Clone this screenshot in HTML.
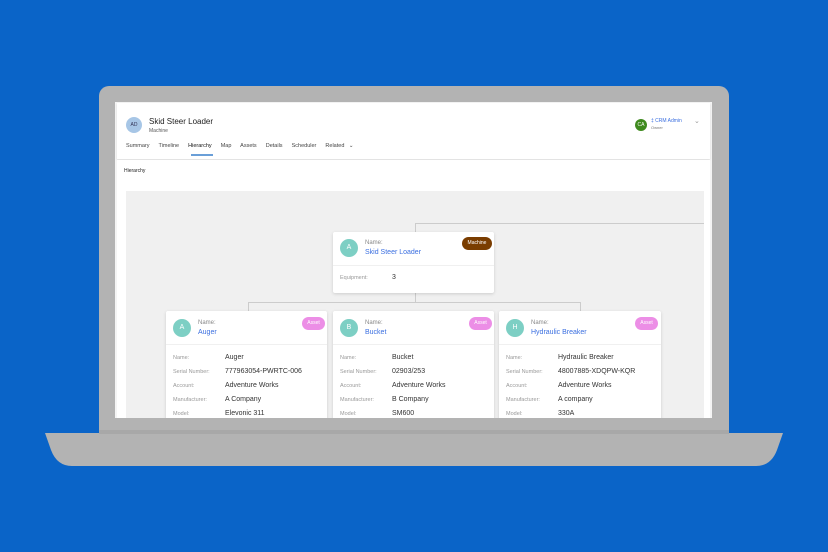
<!DOCTYPE html>
<html><head><style>
*{margin:0;padding:0;box-sizing:border-box}
body{width:828px;height:552px;background:#0a64c8;position:relative;overflow:hidden;font-family:"Liberation Sans",sans-serif}
.a{position:absolute}
.lid{left:99px;top:86px;width:630px;height:348px;background:#b3b3b3;border-radius:10px 10px 0 0}
.scr{left:115px;top:102px;width:597px;height:316px;background:#f4f4f4;overflow:hidden}
.card{position:absolute;background:#fff;box-shadow:0 1px 3px rgba(0,0,0,.15);border-radius:2px}
.av{position:absolute;width:18px;height:18px;border-radius:50%;background:#7dcfc4;color:#fff;font-size:7px;text-align:center;line-height:18px}
.lbl{position:absolute;font-size:6px;color:#888}
.nm{position:absolute;font-size:7px;color:#3b6fe0}
.pill{position:absolute;border-radius:8px;font-size:5px;color:#fff;text-align:center}
.row{position:absolute;left:7px;font-size:5.5px;color:#999}
.val{position:absolute;left:59px;font-size:7px;color:#333}
.ln{position:absolute;background:#ccc}
</style></head><body>
<div class="a lid"></div>
<svg class="a" style="left:0;top:0" width="828" height="552"><path d="M45 433 H783 L777 450 Q771 466 756 466 H72 Q57 466 51 450 Z" fill="#b3b3b3"/><rect x="99" y="430" width="630" height="4" fill="#a8a8a8"/></svg>
<div class="a scr">
 <div class="a" style="left:2px;top:1px;width:593px;height:56px;background:#fff;box-shadow:0 1px 2px rgba(0,0,0,.1)">
  <div class="a" style="left:9px;top:14px;width:16px;height:16px;border-radius:50%;background:#a7c6e6;font-size:5px;color:#335;text-align:center;line-height:16px">AD</div>
  <div class="a" style="left:32px;top:14px;font-size:8px;color:#222">Skid Steer Loader</div>
  <div class="a" style="left:32px;top:25px;font-size:5px;color:#555">Machine</div>
  <div class="a" style="left:9px;top:40px;font-size:5.5px;color:#444;word-spacing:3px">Summary&nbsp; Timeline&nbsp; <span style="color:#111">Hierarchy</span>&nbsp; Map&nbsp; Assets&nbsp; Details&nbsp; Scheduler&nbsp; Related ⌄</div>
  <div class="a" style="left:74px;top:51px;width:22px;height:2px;background:#6a9fd8"></div>
  <div class="a" style="left:518px;top:16px;width:12px;height:12px;border-radius:50%;background:#3f8a1e;color:#fff;font-size:5px;text-align:center;line-height:12px">CA</div>
  <div class="a" style="left:534px;top:15px;font-size:5px;color:#3b6fe0">‡ CRM Admin</div>
  <div class="a" style="left:534px;top:22px;font-size:4px;color:#777">Owner</div>
  <div class="a" style="left:577px;top:14px;font-size:7px;color:#999">⌄</div>
 </div>
 <div class="a" style="left:2px;top:58px;width:593px;height:260px;background:#fff">
  <div class="a" style="left:7px;top:8px;font-size:5px;color:#222">Hierarchy</div>
  <div class="a" style="left:9px;top:31px;width:578px;height:240px;background:#f0f0f0"></div>
 </div>
 <div class="ln" style="left:300px;top:121px;width:289px;height:1px"></div>
 <div class="ln" style="left:300px;top:121px;width:1px;height:10px"></div>
 <div class="ln" style="left:300px;top:190px;width:1px;height:10px"></div>
 <div class="ln" style="left:133px;top:200px;width:333px;height:1px"></div>
 <div class="ln" style="left:133px;top:200px;width:1px;height:10px"></div>
 <div class="ln" style="left:465px;top:200px;width:1px;height:10px"></div>
 <div class="card" style="left:218px;top:130px;width:161px;height:61px">
  <div class="av" style="left:7px;top:7px">A</div>
  <div class="lbl" style="left:32px;top:8px">Name:</div>
  <div class="nm" style="left:32px;top:17px">Skid Steer Loader</div>
  <div class="pill" style="left:129px;top:5px;width:30px;height:13px;line-height:13px;background:#7a3d00">Machine</div>
  <div class="a" style="left:0;top:33px;width:100%;height:1px;background:#f0f0f0"></div>
  <div class="row" style="top:43px">Equipment:</div>
  <div class="val" style="top:42px">3</div>
 </div>
 <div class="card" style="left:51px;top:209px;width:161px;height:120px">
  <div class="av" style="left:7px;top:8px">A</div>
  <div class="lbl" style="left:32px;top:9px">Name:</div>
  <div class="nm" style="left:32px;top:18px">Auger</div>
  <div class="pill" style="left:136px;top:6px;width:23px;height:13px;line-height:13px;background:#ec8ee6">Asset</div>
  <div class="a" style="left:0;top:33px;width:100%;height:1px;background:#f0f0f0"></div>
  <div class="row" style="top:44px">Name:</div><div class="val" style="top:43px">Auger</div>
  <div class="row" style="top:58px">Serial Number:</div><div class="val" style="top:57px">777963054-PWRTC-006</div>
  <div class="row" style="top:72px">Account:</div><div class="val" style="top:71px">Adventure Works</div>
  <div class="row" style="top:86px">Manufacturer:</div><div class="val" style="top:85px">A Company</div>
  <div class="row" style="top:100px">Model:</div><div class="val" style="top:99px">Elevonic 311</div>
 </div>
 <div class="card" style="left:218px;top:209px;width:161px;height:120px">
  <div class="av" style="left:7px;top:8px">B</div>
  <div class="lbl" style="left:32px;top:9px">Name:</div>
  <div class="nm" style="left:32px;top:18px">Bucket</div>
  <div class="pill" style="left:136px;top:6px;width:23px;height:13px;line-height:13px;background:#ec8ee6">Asset</div>
  <div class="a" style="left:0;top:33px;width:100%;height:1px;background:#f0f0f0"></div>
  <div class="row" style="top:44px">Name:</div><div class="val" style="top:43px">Bucket</div>
  <div class="row" style="top:58px">Serial Number:</div><div class="val" style="top:57px">02903/253</div>
  <div class="row" style="top:72px">Account:</div><div class="val" style="top:71px">Adventure Works</div>
  <div class="row" style="top:86px">Manufacturer:</div><div class="val" style="top:85px">B Company</div>
  <div class="row" style="top:100px">Model:</div><div class="val" style="top:99px">SM600</div>
 </div>
 <div class="card" style="left:384px;top:209px;width:162px;height:120px">
  <div class="av" style="left:7px;top:8px">H</div>
  <div class="lbl" style="left:32px;top:9px">Name:</div>
  <div class="nm" style="left:32px;top:18px">Hydraulic Breaker</div>
  <div class="pill" style="left:136px;top:6px;width:23px;height:13px;line-height:13px;background:#ec8ee6">Asset</div>
  <div class="a" style="left:0;top:33px;width:100%;height:1px;background:#f0f0f0"></div>
  <div class="row" style="top:44px">Name:</div><div class="val" style="top:43px">Hydraulic Breaker</div>
  <div class="row" style="top:58px">Serial Number:</div><div class="val" style="top:57px">48007885-XDQPW-KQR</div>
  <div class="row" style="top:72px">Account:</div><div class="val" style="top:71px">Adventure Works</div>
  <div class="row" style="top:86px">Manufacturer:</div><div class="val" style="top:85px">A company</div>
  <div class="row" style="top:100px">Model:</div><div class="val" style="top:99px">330A</div>
 </div>
</div>
</body></html>
